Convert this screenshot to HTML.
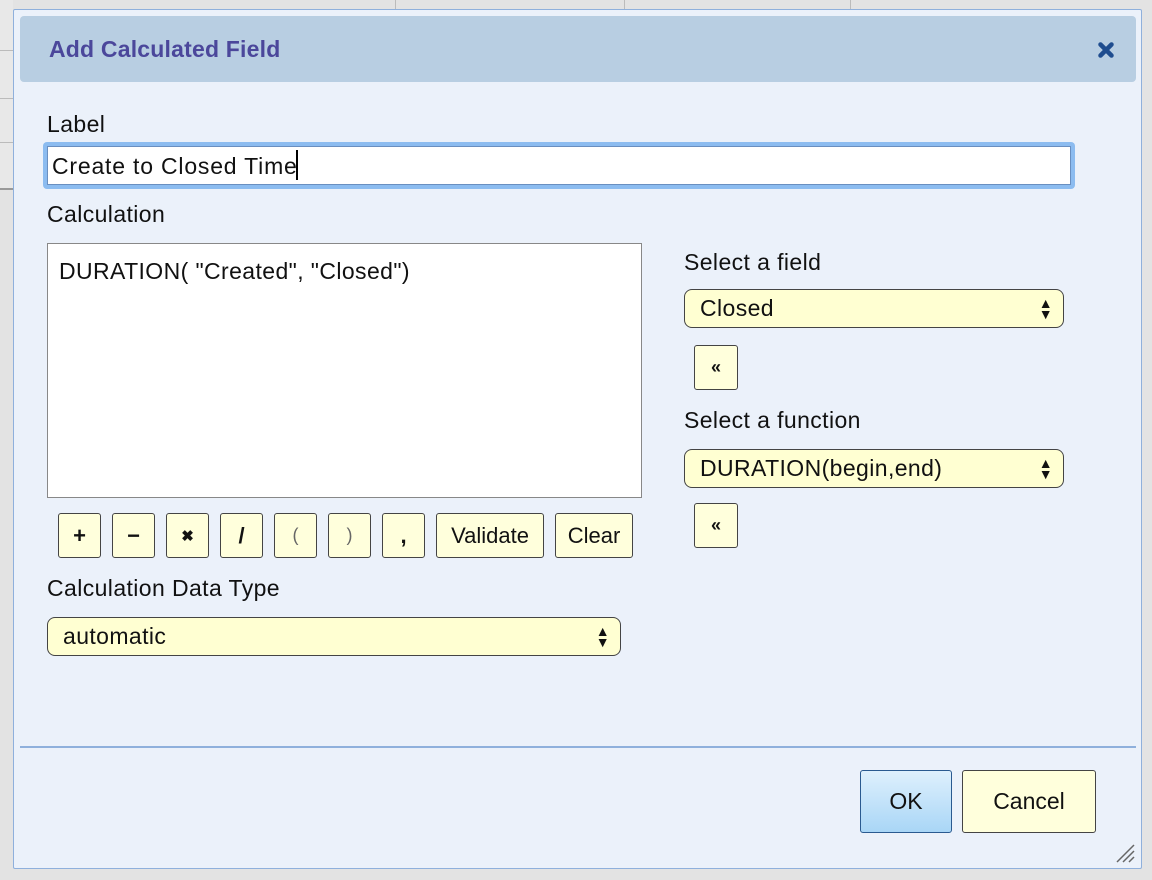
<!DOCTYPE html>
<html><head><meta charset="utf-8"><style>
*{box-sizing:border-box;margin:0;padding:0}
body{width:1152px;height:880px;background:#e3e3e3;position:relative;overflow:hidden;font-family:"Liberation Sans",sans-serif;color:#111}
.a{position:absolute}
.dlg{left:13px;top:9px;width:1129px;height:860px;background:#ebf1fa;border:1px solid #8fb0dc;border-radius:2px}
.title{left:20px;top:16px;width:1116px;height:66px;background:#b8cee2;border-radius:4px}
.t{font-size:23px;line-height:26px;white-space:nowrap;letter-spacing:0.4px}
.btn{background:#ffffdc;border:1px solid #444;border-radius:3px;font-size:22px;display:flex;align-items:center;justify-content:center;font-weight:bold}
.sel{background:#ffffd2;border:1.5px solid #444;border-radius:8px;font-size:23px;letter-spacing:0.4px;padding-left:15px;display:flex;align-items:center}
.arr{position:absolute;right:10px;top:50%;transform:translateY(-50%);font-size:14px;line-height:11px;text-align:center}
</style></head><body>
<div class="a" style="left:0;top:0;width:13px;height:190px;background:#e8e8e8"></div>
<div class="a" style="left:0;top:50px;width:13px;height:1px;background:#bbb"></div>
<div class="a" style="left:0;top:98px;width:13px;height:1px;background:#bbb"></div>
<div class="a" style="left:0;top:142px;width:13px;height:1px;background:#bbb"></div>
<div class="a" style="left:0;top:188px;width:13px;height:2px;background:#999"></div>
<div class="a" style="left:395px;top:0;width:1px;height:9px;background:#bbb"></div>
<div class="a" style="left:624px;top:0;width:1px;height:9px;background:#bbb"></div>
<div class="a" style="left:850px;top:0;width:1px;height:9px;background:#bbb"></div>
<div class="a dlg"></div>
<div class="a title"></div>
<div class="a t" style="left:49px;top:36px;font-weight:bold;color:#4b479b;letter-spacing:0.2px">Add Calculated Field</div>
<svg class="a" style="left:1097px;top:41px" width="18" height="18" viewBox="0 0 18 18"><path d="M3.5 3.5L14.5 14.5M14.5 3.5L3.5 14.5" stroke="#1f4d8f" stroke-width="4.5" stroke-linecap="round"/></svg>
<div class="a t" style="left:47px;top:111px">Label</div>
<div class="a" style="left:43px;top:142px;width:1032px;height:47px;border-radius:4px;background:#8cbcf0"></div>
<div class="a" style="left:47px;top:146px;width:1024px;height:39px;background:#fff;border:1px solid #6a8fc0"></div>
<div class="a t" style="left:52px;top:153px;letter-spacing:0.8px">Create to Closed Time</div>
<div class="a" style="left:296px;top:150px;width:2px;height:30px;background:#000"></div>
<div class="a t" style="left:47px;top:201px">Calculation</div>
<div class="a" style="left:47px;top:243px;width:595px;height:255px;background:#fff;border:1px solid #888"></div>
<div class="a t" style="left:59px;top:258px">DURATION( "Created", "Closed")</div>
<div class="a btn" style="left:58px;top:513px;width:43px;height:45px">+</div>
<div class="a btn" style="left:112px;top:513px;width:43px;height:45px">−</div>
<div class="a btn" style="left:166px;top:513px;width:43px;height:45px;font-size:15px">✖</div>
<div class="a btn" style="left:220px;top:513px;width:43px;height:45px">/</div>
<div class="a btn" style="left:274px;top:513px;width:43px;height:45px;font-weight:normal;font-size:18px;color:#666">(</div>
<div class="a btn" style="left:328px;top:513px;width:43px;height:45px;font-weight:normal;font-size:18px;color:#666">)</div>
<div class="a btn" style="left:382px;top:513px;width:43px;height:45px">,</div>
<div class="a btn" style="left:436px;top:513px;width:108px;height:45px;font-weight:normal">Validate</div>
<div class="a btn" style="left:555px;top:513px;width:78px;height:45px;font-weight:normal">Clear</div>
<div class="a t" style="left:47px;top:575px">Calculation Data Type</div>
<div class="a sel" style="left:47px;top:617px;width:574px;height:39px">automatic<div class="arr">▲<br>▼</div></div>
<div class="a t" style="left:684px;top:249px">Select a field</div>
<div class="a sel" style="left:684px;top:289px;width:380px;height:39px">Closed<div class="arr">▲<br>▼</div></div>
<div class="a btn" style="left:694px;top:345px;width:44px;height:45px;font-size:18px">«</div>
<div class="a t" style="left:684px;top:407px">Select a function</div>
<div class="a sel" style="left:684px;top:449px;width:380px;height:39px">DURATION(begin,end)<div class="arr">▲<br>▼</div></div>
<div class="a btn" style="left:694px;top:503px;width:44px;height:45px;font-size:18px">«</div>
<div class="a" style="left:20px;top:746px;width:1116px;height:2px;background:#8fb0dc"></div>
<div class="a btn" style="left:860px;top:770px;width:92px;height:63px;font-weight:normal;font-size:23px;background:linear-gradient(#def0fd,#a9d6f6);border-color:#2a5a90">OK</div>
<div class="a btn" style="left:962px;top:770px;width:134px;height:63px;font-weight:normal;font-size:23px">Cancel</div>
<svg class="a" style="left:1114px;top:842px" width="22" height="22"><path d="M3 20L20 3M9 20L20 9M15 20L20 15" stroke="#666" stroke-width="1.5"/></svg>
</body></html>
